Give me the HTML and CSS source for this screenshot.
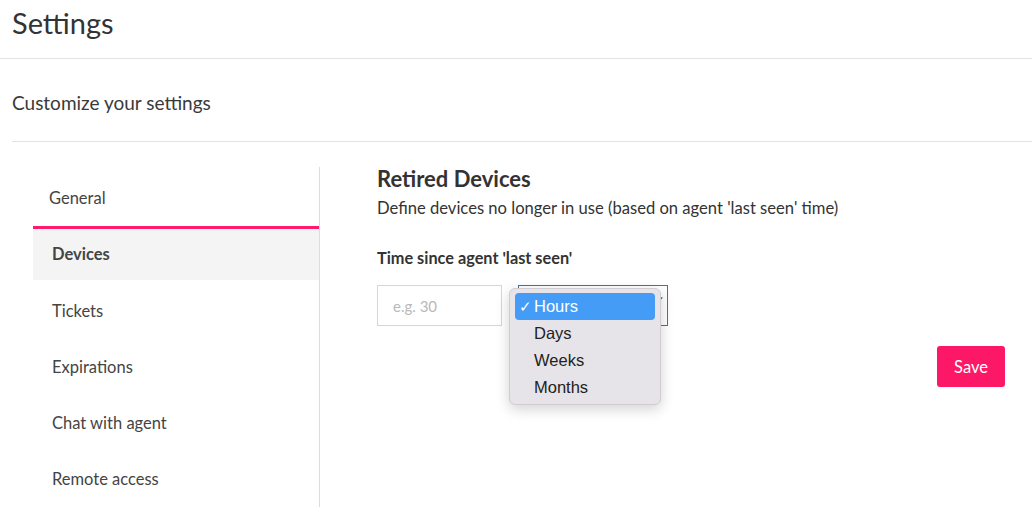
FILE: index.html
```html
<!DOCTYPE html>
<html>
<head>
	<title>Settings</title>
	<link rel="stylesheet" href="styles.css">
</head>
<body>

	<header class="page-head">
		<h1>Settings</h1>
	</header>

	<div class="sub-head">Customize your settings</div>

	<div class="settings">
		<ul class="side-nav">
			<li class="first">General</li>
			<li class="active">Devices</li>
			<li>Tickets</li>
			<li>Expirations</li>
			<li>Chat with agent</li>
			<li>Remote access</li>
		</ul>

		<div class="panel">
			<h2>Retired Devices</h2>
			<p class="desc">Define devices no longer in use (based on agent 'last seen' time)</p>
			<label class="field-label">Time since agent 'last seen'</label>
			<div class="field-row">
				<input type="text" class="num-input" placeholder="e.g. 30">
				<div class="select-wrap">
					<div class="select-box"><span class="arrow">&#8964;</span></div>
					<ul class="dropdown">
						<li class="selected"><span class="check">&#10003;</span>Hours</li>
						<li>Days</li>
						<li>Weeks</li>
						<li>Months</li>
					</ul>
				</div>
			</div>
			<div class="actions">
				<button class="save">Save</button>
			</div>
		</div>
	</div>

</body>
</html>
```

FILE: styles.css
```css
html {
	background: #fff;
}

body {
	margin: 0;
	font-family: Lato, "Open Sans", sans-serif;
	color: #333;
}

.page-head {
	border-bottom: 1px solid #e3e3e3;
	height: 58px;
	padding-left: 12px;
}

.page-head h1 {
	margin: 0;
	padding-top: 5px;
	font-size: 29px;
	font-weight: 400;
	color: #333;
}

.sub-head {
	margin-left: 12px;
	padding: 32px 0 27px;
	font-size: 19px;
	color: #3a3a3a;
	border-bottom: 1px solid #e3e3e3;
}

.settings {
	display: flex;
	padding: 25px 0 0 33px;
}

.side-nav {
	list-style: none;
	margin: 0;
	padding: 3px 0 0;
	box-sizing: border-box;
	width: 287px;
	border-right: 1px solid #dcdcdc;
	height: 340px;
}

.side-nav li {
	height: 56px;
	line-height: 56px;
	padding-left: 19px;
	font-size: 16.5px;
	color: #444;
}

.side-nav li.first {
	line-height: 56px;
	padding-left: 16px;
}

.side-nav li.active {
	height: 51px;
	line-height: 51px;
	border-top: 3px solid #ff1a6b;
	background: #f4f4f4;
	font-weight: 700;
	margin-bottom: 3px;
}

.panel {
	flex: 1;
	padding: 0 27px 0 57px;
}

.panel h2 {
	margin: 0;
	font-size: 22px;
	font-weight: 700;
	color: #333;
	line-height: 24px;
}

.desc {
	margin: 8px 0 0;
	font-size: 16.6px;
	line-height: 19px;
	color: #333;
}

.field-label {
	display: block;
	margin-top: 30px;
	font-size: 16.3px;
	line-height: 19px;
	font-weight: 700;
}

.field-row {
	display: flex;
	gap: 16px;
	margin-top: 18px;
}

.num-input {
	box-sizing: border-box;
	width: 125px;
	height: 41px;
	border: 1px solid #d6d6d6;
	padding: 0 15px;
	font-family: inherit;
	font-size: 15px;
	color: #333;
}

.num-input::placeholder {
	color: #b9b9b9;
}

.select-wrap {
	position: relative;
}

.select-box {
	box-sizing: border-box;
	width: 150px;
	height: 41px;
	border: 1px solid #3579a8;
}

.arrow {
	position: absolute;
	right: 3px;
	top: 3px;
	font-size: 12px;
	color: #444;
}

.dropdown {
	position: absolute;
	left: -9px;
	top: 3px;
	width: 152px;
	margin: 0;
	padding: 4px 5px 3px;
	box-sizing: border-box;
	list-style: none;
	background: #e6e4e8;
	border: 1px solid #cfcdd1;
	border-radius: 6px;
	box-shadow: 0 4px 14px rgba(0, 0, 0, 0.18);
	font-family: "Liberation Sans", Arial, sans-serif;
	font-size: 16.5px;
	color: #222;
}

.dropdown li {
	height: 27px;
	line-height: 27px;
	padding-left: 19px;
}

.dropdown li.selected {
	background: #449cf6;
	color: #fff;
	border-radius: 4px;
	padding-left: 4px;
}

.check {
	display: inline-block;
	width: 15px;
	font-size: 15px;
}

.actions {
	display: flex;
	justify-content: flex-end;
	margin-top: 20px;
}

.save {
	width: 68px;
	height: 41px;
	border: none;
	border-radius: 3px;
	background: #fd1867;
	color: #fff;
	font-family: inherit;
	font-size: 16.5px;
}
```
